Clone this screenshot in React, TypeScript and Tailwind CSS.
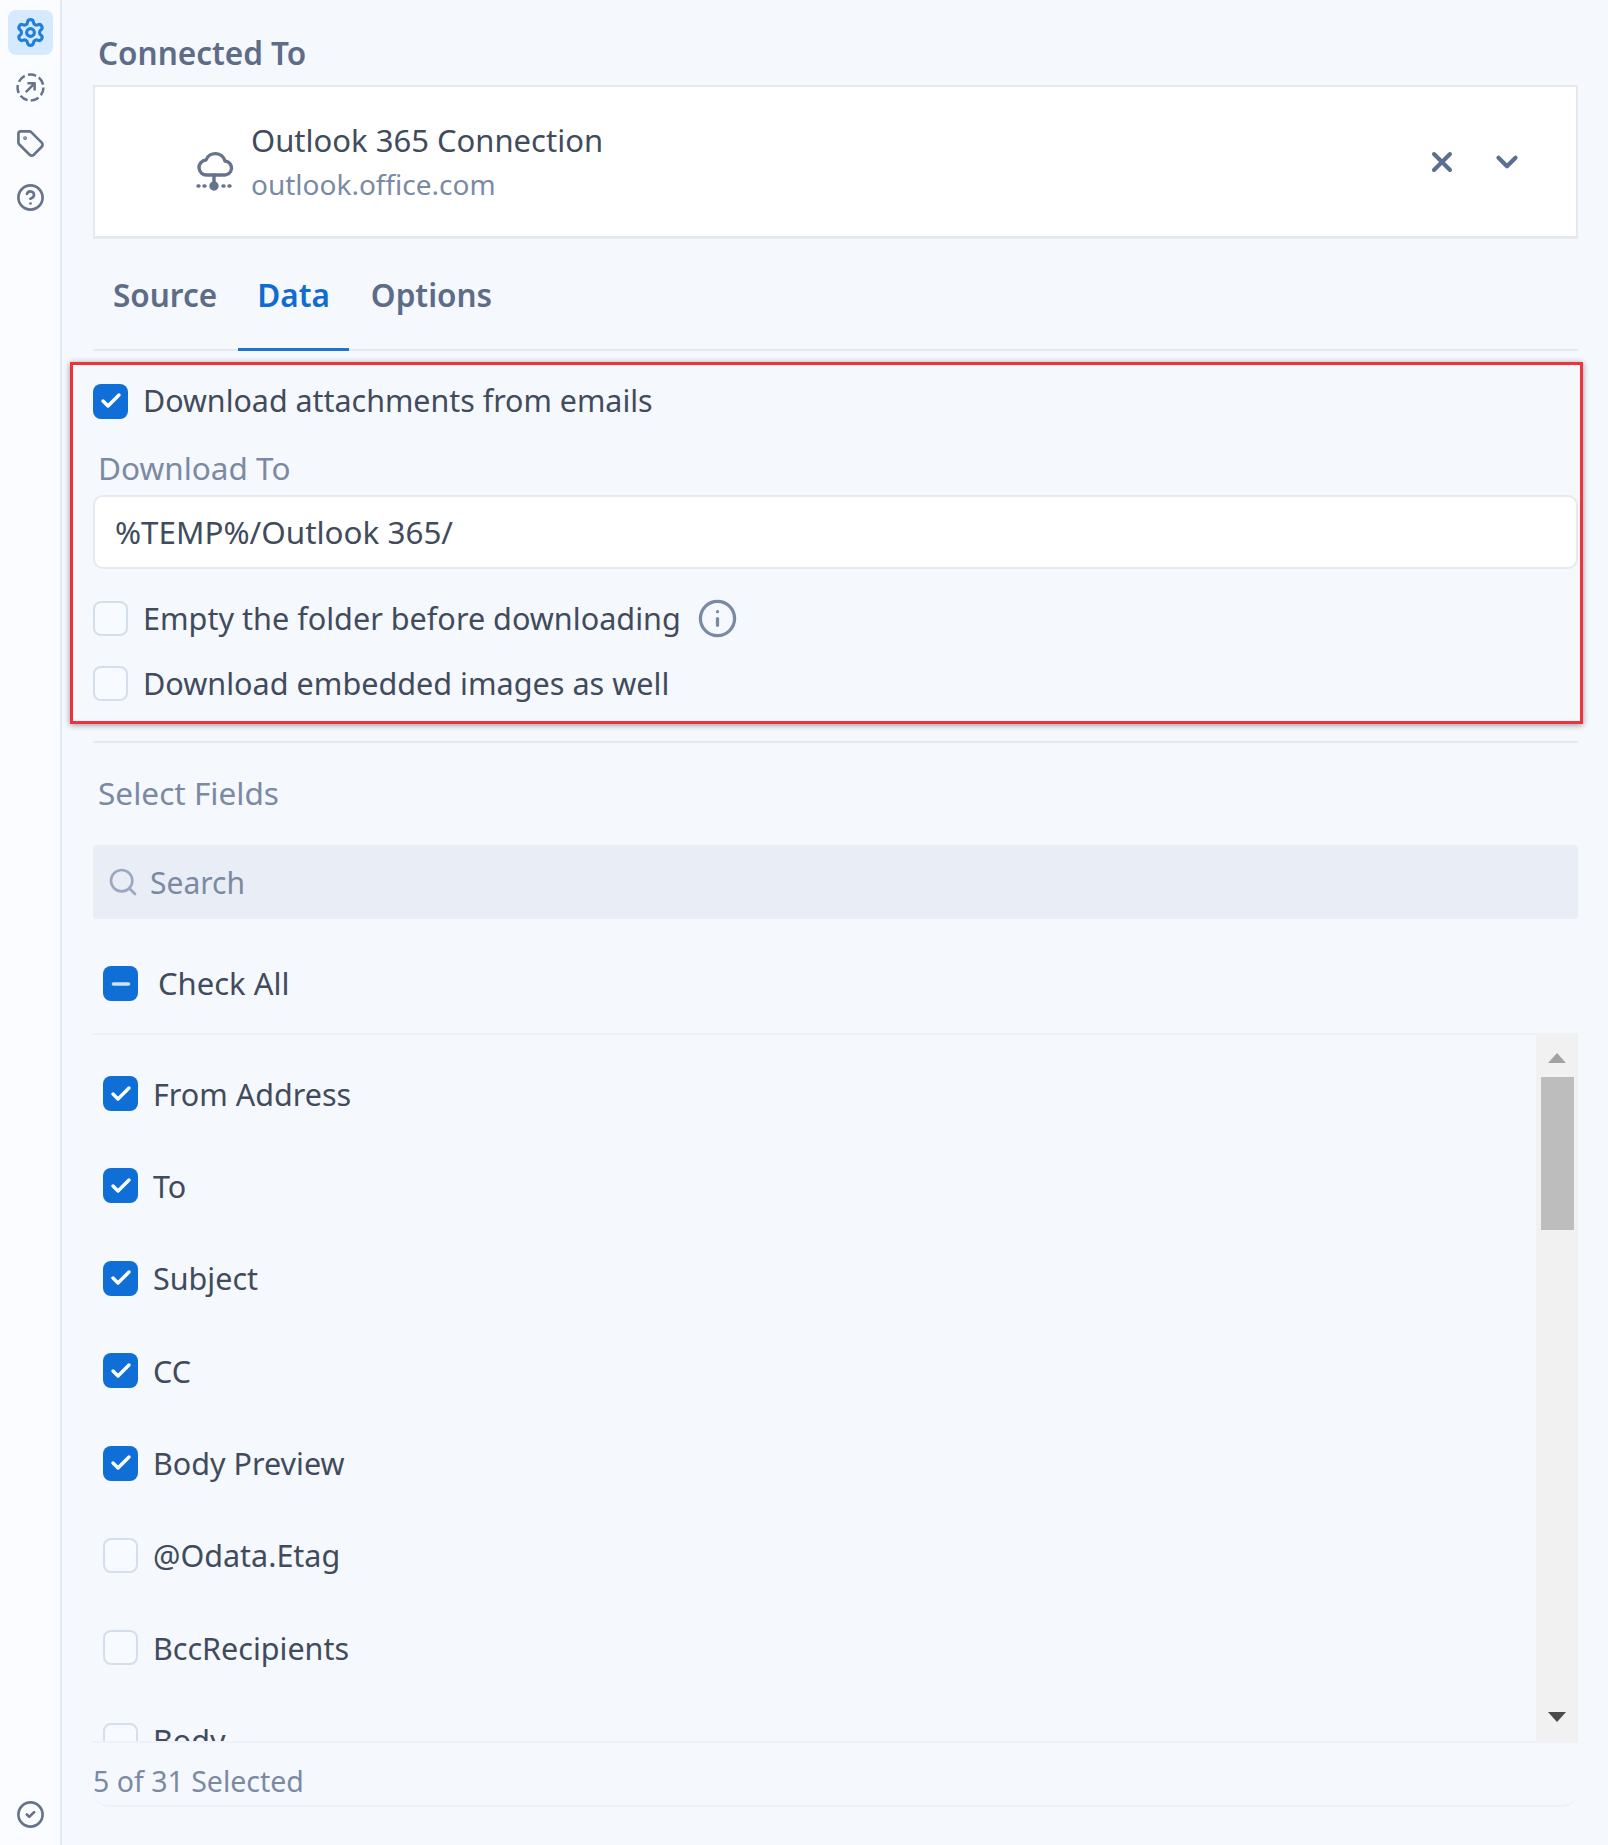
import React from 'react';
import { Settings, Tag, CircleHelp, CircleCheck, X, ChevronDown, Info, Search, Check, Minus } from 'lucide-react';

const FIELDS = [
  { name: 'From Address', checked: true },
  { name: 'To', checked: true },
  { name: 'Subject', checked: true },
  { name: 'CC', checked: true },
  { name: 'Body Preview', checked: true },
  { name: '@Odata.Etag', checked: false },
  { name: 'BccRecipients', checked: false },
  { name: 'Body', checked: false },
];

function Box({ checked, minus }: { checked?: boolean; minus?: boolean }) {
  if (minus) {
    return (
      <span className="flex h-[35px] w-[35px] shrink-0 items-center justify-center rounded-[8px] bg-[#0f6fd6]">
        <Minus size={26} strokeWidth={3.2} className="text-[#cfe2f7]" />
      </span>
    );
  }
  if (checked) {
    return (
      <span className="flex h-[35px] w-[35px] shrink-0 items-center justify-center rounded-[8px] bg-[#0f6fd6]">
        <Check size={24} strokeWidth={3.4} className="text-white" />
      </span>
    );
  }
  return <span className="h-[35px] w-[35px] shrink-0 rounded-[8px] border-2 border-[#d5deeb] bg-[#f7faff]" />;
}

function CloudNetwork() {
  return (
    <svg width="38" height="40" viewBox="0 0 38 40" fill="none" stroke="#66738a" strokeWidth="3.4" strokeLinecap="round" strokeLinejoin="round">
      <path d="M11 24h17a7 7 0 0 0 1-14 10 10 0 0 0-19-1 7.5 7.5 0 0 0 1 15z" />
      <path d="M18 24v8" />
      <circle cx="18" cy="35" r="3" fill="#66738a" />
      <path d="M2 35h1M8 35h1M27 35h1M33 35h1" />
    </svg>
  );
}

function DashedArrow() {
  return (
    <svg width="29" height="29" viewBox="0 0 28 28" fill="none" stroke="#66738a" strokeWidth="2.4" strokeLinejoin="round">
      <circle cx="14" cy="14" r="12.5" strokeDasharray="8 3.2" />
      <path d="M9.5 18.5l8-8M11 10h7v7" />
    </svg>
  );
}

export default function App() {
  return (
    <div className="flex h-[1845px] w-[1608px] overflow-hidden bg-[#f5f8fd] font-['Noto_Sans',sans-serif] text-[#414b5c]">
      {/* Left rail */}
      <aside className="flex w-[62px] shrink-0 flex-col items-center border-r-2 border-[#e3e9f2] bg-[#fafcff] pt-[10px] pb-[17px]">
        <div className="flex h-[45px] w-[45px] items-center justify-center rounded-[8px] bg-[#d6eaff]">
          <Settings size={31} strokeWidth={2.4} className="text-[#1f7fdc]" />
        </div>
        <div className="mt-[18px] flex h-[28px] items-center"><DashedArrow /></div>
        <div className="mt-[28px] flex h-[28px] items-center"><Tag size={29} strokeWidth={2.2} className="text-[#66738a]" /></div>
        <div className="mt-[26px] flex h-[28px] items-center"><CircleHelp size={29} strokeWidth={2.2} className="text-[#66738a]" /></div>
        <div className="mt-auto flex h-[28px] items-center"><CircleCheck size={29} strokeWidth={2.2} className="text-[#66738a]" /></div>
      </aside>

      {/* Panel */}
      <main className="flex min-w-0 flex-1 flex-col pl-[31px] pr-[30px]">
        <h2 className="ml-[5px] mt-[33px] h-[40px] text-[31.5px] leading-[40px] font-semibold text-[#5d6c87]">Connected To</h2>

        <div className="mt-[12px] flex h-[154px] items-center border-2 border-b-[3px] border-[#e6e9ee] bg-white pl-[101px] pr-[52px]">
          <span className="mt-[18px] mr-[17px]"><CloudNetwork /></span>
          <div className="flex-1">
            <div className="text-[31px] leading-[40px] text-[#414b5c]">Outlook 365 Connection</div>
            <div className="mt-[4px] text-[28px] leading-[40px] text-[#7b8aa3]">outlook.office.com</div>
          </div>
          <X size={32} strokeWidth={3} className="text-[#5b6f90]" />
          <ChevronDown size={34} strokeWidth={3} className="ml-[32px] text-[#5b6f90]" />
        </div>

        {/* Tabs */}
        <div className="mt-[21px] flex h-[91px] border-b-2 border-[#e5e9f0] pl-[20px] text-[31.5px] leading-[40px] font-semibold text-[#5d6c87]">
          <span className="mr-[21px] pt-[15px]">Source</span>
          <span className="-mb-[2px] mr-[22px] border-b-[3px] border-[#1f73d0] px-[19px] pt-[15px] text-[#0f6cd0]">Data</span>
          <span className="pt-[15px]">Options</span>
        </div>

        {/* Highlighted options */}
        <section className="-ml-[23px] -mr-[5px] mt-[11px] h-[362px] border-[3px] border-[#f0323c] pl-[20px] pr-[2px] pt-[16px] shadow-[0_1px_6px_rgba(0,0,0,0.4)]">
          <label className="flex h-[40px] items-center">
            <Box checked />
            <span className="ml-[15px] text-[30.4px] leading-[40px]">Download attachments from emails</span>
          </label>
          <div className="ml-[5px] mt-[27px] h-[40px] text-[31.5px] leading-[40px] text-[#7b8aa3]">Download To</div>
          <div className="mt-[7px] flex h-[74px] items-center rounded-[10px] border-2 border-[#e4e9f2] bg-white pl-[20px] text-[31.4px]">
            %TEMP%/Outlook 365/
          </div>
          <label className="mt-[29px] flex h-[40px] items-center">
            <Box />
            <span className="ml-[15px] text-[30.6px] leading-[40px]">Empty the folder before downloading</span>
            <Info size={41} strokeWidth={1.9} className="ml-[16px] text-[#7b8aa3]" />
          </label>
          <label className="mt-[25px] flex h-[40px] items-center">
            <Box />
            <span className="ml-[15px] text-[30.6px] leading-[40px]">Download embedded images as well</span>
          </label>
        </section>

        <div className="mt-[17px] border-t-2 border-[#e5e9f0]" />

        <div className="ml-[5px] mt-[30px] h-[40px] text-[31.6px] leading-[40px] text-[#7b8aa3]">Select Fields</div>

        <div className="mt-[32px] flex h-[74px] items-center rounded-[4px] bg-[#e9eef6] pl-[14px] text-[30px] text-[#7b8aa3]">
          <Search size={32} strokeWidth={2} className="mr-[11px] text-[#9aa9c1]" />
          Search
        </div>

        <label className="ml-[10px] mt-[47px] flex h-[35px] items-center">
          <Box minus />
          <span className="ml-[20px] -mt-[2px] text-[31px] leading-[40px]">Check All</span>
        </label>

        <div className="mt-[32px] flex h-[710px] border-y-2 border-[#eef1f6]">
          <div className="min-w-0 flex-1 overflow-hidden pl-[10px] pt-[41px]">
            {FIELDS.map((f) => (
              <label key={f.name} className="mb-[57.4px] flex h-[35px] items-center">
                <Box checked={f.checked} />
                <span className="ml-[15px] text-[30.5px] leading-[40px]">{f.name}</span>
              </label>
            ))}
          </div>
          {/* Scrollbar */}
          <div className="flex w-[42px] shrink-0 flex-col items-center bg-[#f1f1f1]">
            <span className="mt-[18px] h-0 w-0 border-x-[9px] border-b-[10px] border-x-transparent border-b-[#a3a3a3]" />
            <div className="mt-[14px] h-[153px] w-[33px] bg-[#bdbdbd]" />
            <span className="mt-auto mb-[19px] h-0 w-0 border-x-[9px] border-t-[10px] border-x-transparent border-t-[#4a4a4a]" />
          </div>
        </div>

        <div className="flex h-[64px] items-center rounded-b-[16px] border-b-2 border-[#eef1f6] pt-[14px] text-[28.5px] text-[#7b8aa3]">
          5 of 31 Selected
        </div>
      </main>
    </div>
  );
}
